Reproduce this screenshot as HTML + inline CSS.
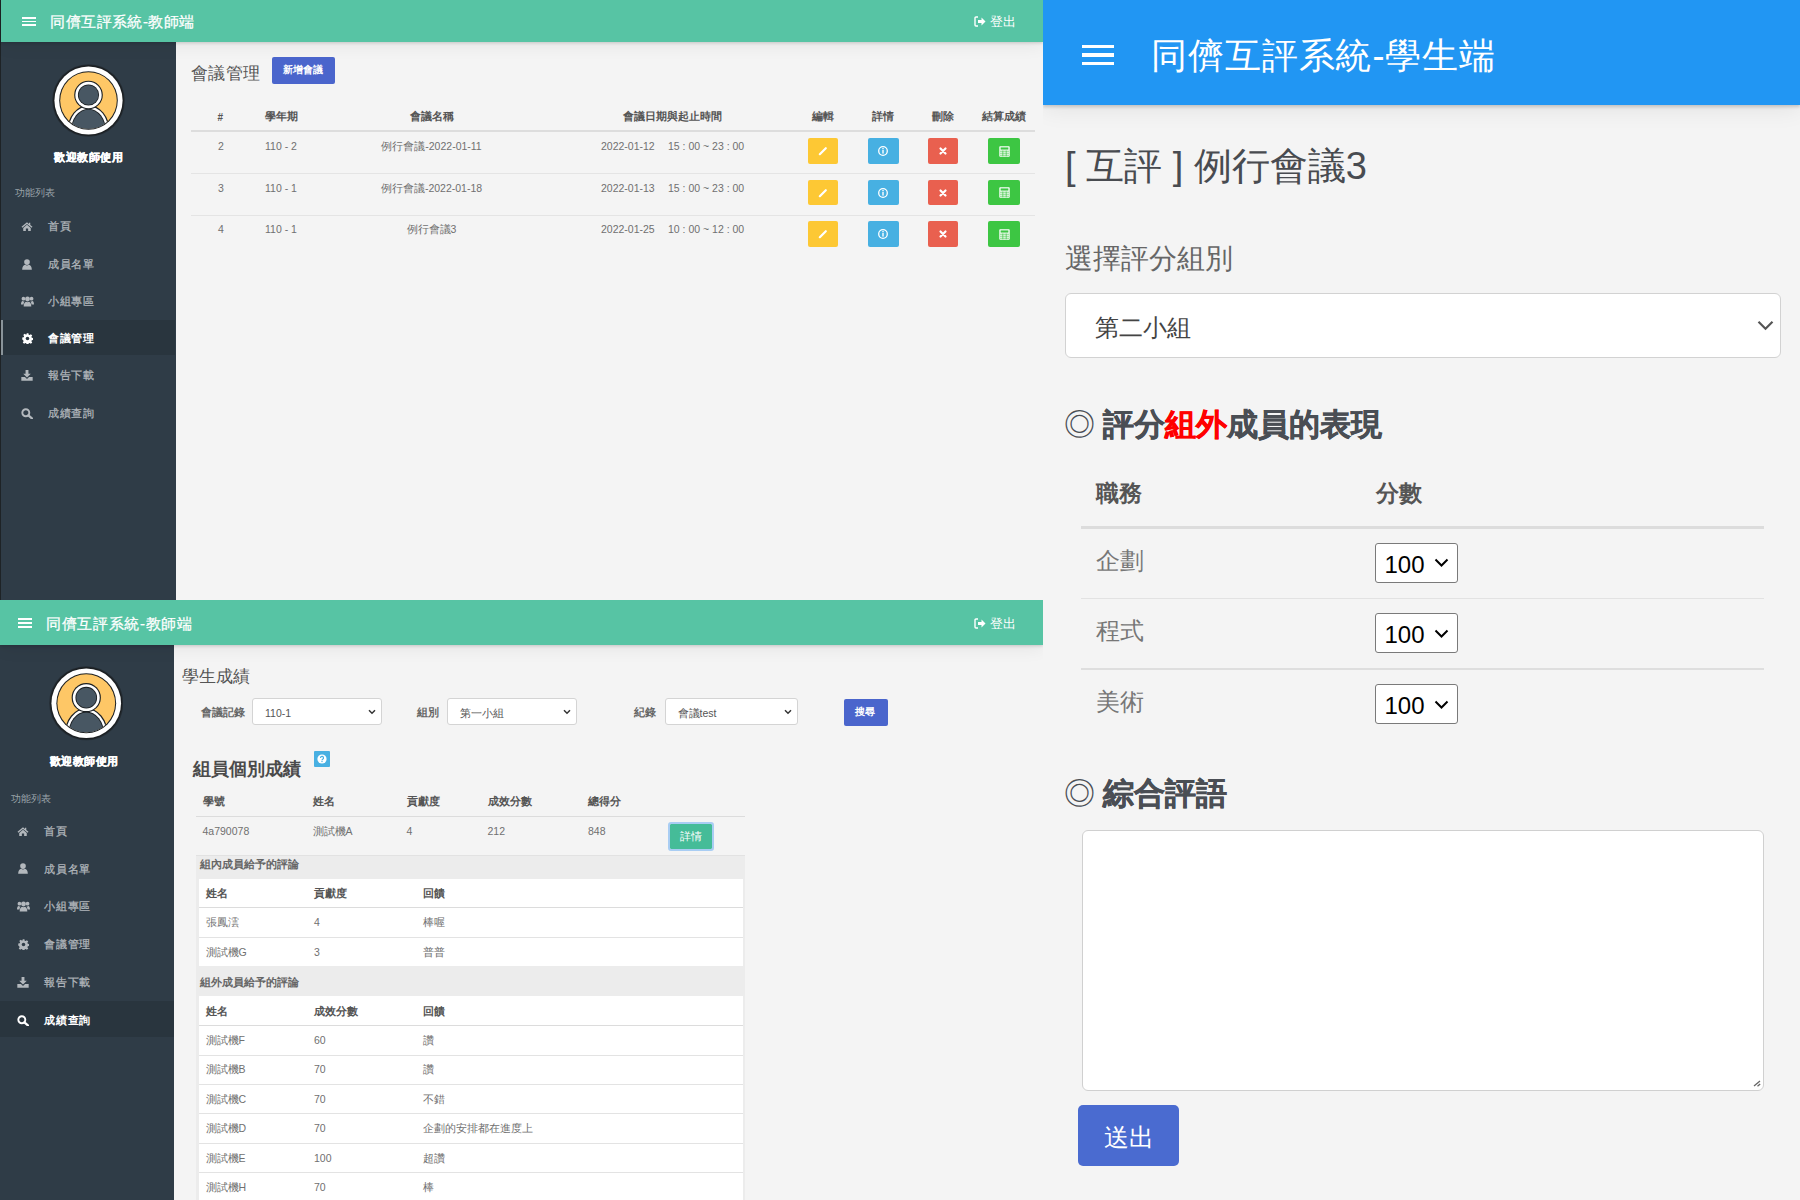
<!DOCTYPE html>
<html lang="zh-Hant">
<head>
<meta charset="utf-8">
<style>
*{box-sizing:border-box;margin:0;padding:0}
html,body{width:1800px;height:1200px;overflow:hidden;background:#f4f4f4;font-family:"Liberation Sans",sans-serif}
.a{position:absolute;white-space:nowrap;line-height:1}
.panel{position:absolute;overflow:hidden;background:#f4f4f4}
.hdr{position:absolute;background:#57c4a4;box-shadow:0 1px 3px rgba(0,0,0,.16),0 3px 18px rgba(0,0,0,.07)}
.bars i{position:absolute;left:0;width:100%;background:#fff;display:block}
svg{display:block}
</style>
</head>
<body>
<div class="panel" style="left:0;top:0;width:1043px;height:600px">
<div class="a" style="left:0px;top:0px;width:176px;height:600px;background:#2f3c47;"></div>
<div class="a" style="left:0px;top:0px;width:1px;height:600px;background:#1e2326;"></div>
<div class="hdr" style="left:1px;top:0;width:1042px;height:42px"></div>
<div class="bars a" style="left:22px;top:17px;width:14px;height:9px"><i style="top:0;height:1.6px"></i><i style="top:3.6px;height:1.6px"></i><i style="top:7.2px;height:1.6px"></i></div>
<div class="a" style="left:50.2px;top:13.5px;font-size:15px;color:#fff;letter-spacing:0.45px;-webkit-text-stroke:0.25px #fff;">同儕互評系統-教師端</div>
<div class="a" style="left:974px;top:15px;font-size:13px;color:#fff"><svg width="12" height="11" viewBox="0 0 12 11" style="display:inline-block;vertical-align:-1px;margin-right:4px"><path d="M4 1H2a1 1 0 0 0-1 1v7a1 1 0 0 0 1 1h2" fill="none" stroke="#fff" stroke-width="1.4"/><path d="M4 4h3.5V1.5L11.5 5.5 7.5 9.5V7H4z" fill="#fff"/></svg>登出</div>
<svg class="a" style="left:51.7px;top:64px" width="73" height="73" viewBox="0 0 73 73">
<circle cx="36.5" cy="36.5" r="36.3" fill="#1b1f22" opacity=".55"/><circle cx="36.5" cy="36.5" r="35.4" fill="#1b1f22"/><circle cx="36.5" cy="36.5" r="34.1" fill="#fff"/>
<circle cx="36.5" cy="36.5" r="29.3" fill="#1b1f22"/><circle cx="36.5" cy="36.5" r="28.3" fill="#fec766"/>
<clipPath id="av1"><circle cx="36.5" cy="36.5" r="28.3"/></clipPath>
<g clip-path="url(#av1)"><ellipse cx="36.5" cy="67.3" rx="21.2" ry="26.2" fill="#1b1f22"/><ellipse cx="36.5" cy="67.3" rx="20" ry="25" fill="#fff"/><ellipse cx="36.5" cy="67.3" rx="17.6" ry="22.6" fill="#1b1f22"/><ellipse cx="36.5" cy="67.3" rx="16.8" ry="21.8" fill="#485763"/></g>
<circle cx="36.5" cy="31" r="14.3" fill="#1b1f22"/><circle cx="36.5" cy="31" r="13.2" fill="#fff"/><circle cx="36.5" cy="31" r="10.6" fill="#1b1f22"/><circle cx="36.5" cy="31" r="9.8" fill="#485763"/>
</svg>
<div class="a" style="left:54px;top:151.5px;font-size:11px;color:#fff;font-weight:bold;letter-spacing:0.5px;-webkit-text-stroke:0.3px #fff;">歡迎教師使用</div>
<div class="a" style="left:15px;top:187.5px;font-size:9.5px;color:#9aa3a9;">功能列表</div>
<div class="a" style="left:1px;top:320px;width:174px;height:35px;background:#29353e;"></div>
<div class="a" style="left:1px;top:320px;width:2px;height:35px;background:#8a949a;"></div>
<div class="a" style="left:14px;top:219px;width:26px;height:14px;display:flex;align-items:center;justify-content:center"><svg width="12" height="9" viewBox="0 0 14 11"><path d="M7 0.3L0.3 5.9 1.3 7 7 2.3 12.7 7 13.7 5.9 11 3.6V0.8H9.4v1.5z" fill="#b3b8bd"/><path d="M2.4 7.2L7 3.3 11.6 7.2V11H8.4V8H5.6v3H2.4z" fill="#b3b8bd"/></svg></div>
<div class="a" style="left:48px;top:220.8px;font-size:11px;color:#b3b8bd;letter-spacing:0.6px;-webkit-text-stroke:0.25px #b3b8bd;">首頁</div>
<div class="a" style="left:14px;top:257px;width:26px;height:14px;display:flex;align-items:center;justify-content:center"><svg width="10" height="11" viewBox="0 0 12 13"><circle cx="6" cy="3.6" r="3.4" fill="#b3b8bd"/><path d="M0.2 12.8c0-3.6 1.6-5.6 3.5-5.9 .8.5 1.5.7 2.3.7s1.5-.2 2.3-.7c1.9.3 3.5 2.3 3.5 5.9z" fill="#b3b8bd"/></svg></div>
<div class="a" style="left:48px;top:258.8px;font-size:11px;color:#b3b8bd;letter-spacing:0.6px;-webkit-text-stroke:0.25px #b3b8bd;">成員名單</div>
<div class="a" style="left:14px;top:294px;width:26px;height:14px;display:flex;align-items:center;justify-content:center"><svg width="13" height="11" viewBox="0 0 16 13"><circle cx="8" cy="3.4" r="3" fill="#b3b8bd"/><circle cx="3" cy="3" r="2.3" fill="#b3b8bd"/><circle cx="13" cy="3" r="2.3" fill="#b3b8bd"/><path d="M3.3 12.8c0-3.8 1.6-5.8 2.8-6 .6.4 1.2.6 1.9.6s1.3-.2 1.9-.6c1.2.2 2.8 2.2 2.8 6z" fill="#b3b8bd"/><path d="M0 10.2c0-2.8 1-4 1.8-4.2.4.3.9.4 1.4.4.5 0 .8-.1 1.2-.3-.8 1.2-1.2 2.5-1.3 4.1z" fill="#b3b8bd"/><path d="M16 10.2c0-2.8-1-4-1.8-4.2-.4.3-.9.4-1.4.4-.5 0-.8-.1-1.2-.3.8 1.2 1.2 2.5 1.3 4.1z" fill="#b3b8bd"/></svg></div>
<div class="a" style="left:48px;top:295.8px;font-size:11px;color:#b3b8bd;letter-spacing:0.6px;-webkit-text-stroke:0.25px #b3b8bd;">小組專區</div>
<div class="a" style="left:14px;top:331px;width:26px;height:14px;display:flex;align-items:center;justify-content:center"><svg width="11" height="11" viewBox="0 0 13 13"><path d="M5.4 0.3h2.2l.3 1.7 1.2.5 1.4-1 1.6 1.6-1 1.4.5 1.2 1.7.3v2.2l-1.7.3-.5 1.2 1 1.4-1.6 1.6-1.4-1-1.2.5-.3 1.7H5.4l-.3-1.7-1.2-.5-1.4 1-1.6-1.6 1-1.4-.5-1.2L.3 7.6V5.4L2 5.1l.5-1.2-1-1.4 1.6-1.6 1.4 1 1.2-.5z" fill="#fff"/><circle cx="6.5" cy="6.5" r="2.1" fill="#29353e"/></svg></div>
<div class="a" style="left:48px;top:332.8px;font-size:11px;color:#fff;font-weight:bold;letter-spacing:0.6px;">會議管理</div>
<div class="a" style="left:14px;top:368px;width:26px;height:14px;display:flex;align-items:center;justify-content:center"><svg width="12" height="11" viewBox="0 0 14 13"><path d="M5.3 0h3.4v4.5h2.8L7 9 2.5 4.5h2.8z" fill="#b3b8bd"/><path d="M0.3 8.3h4.3L7 10.7l2.4-2.4h4.3v4.4H0.3z" fill="#b3b8bd"/></svg></div>
<div class="a" style="left:48px;top:369.8px;font-size:11px;color:#b3b8bd;letter-spacing:0.6px;-webkit-text-stroke:0.25px #b3b8bd;">報告下載</div>
<div class="a" style="left:14px;top:406px;width:26px;height:14px;display:flex;align-items:center;justify-content:center"><svg width="12" height="11" viewBox="0 0 13 12"><circle cx="5.2" cy="5.2" r="3.8" fill="none" stroke="#b3b8bd" stroke-width="2.1"/><path d="M8 8l3.8 3.3" stroke="#b3b8bd" stroke-width="2.5" stroke-linecap="round"/></svg></div>
<div class="a" style="left:48px;top:407.8px;font-size:11px;color:#b3b8bd;letter-spacing:0.6px;-webkit-text-stroke:0.25px #b3b8bd;">成績查詢</div>
<div class="a" style="left:191px;top:64.5px;font-size:17px;color:#555;letter-spacing:0.4px;">會議管理</div>
<div class="a" style="left:272px;top:57px;width:63px;height:27px;background:#4a65cc;border-radius:2px"></div>
<div class="a" style="left:283px;top:65px;font-size:9.5px;color:#fff;font-weight:bold;">新增會議</div>
<div class="a" style="left:217.5px;top:112.5px;font-size:10px;color:#555;font-weight:bold">#</div>
<div class="a" style="left:265px;top:111px;font-size:11px;color:#555;font-weight:bold;">學年期</div>
<div class="a" style="left:281.5px;width:300px;text-align:center;top:111px;font-size:11px;color:#555;font-weight:bold;">會議名稱</div>
<div class="a" style="left:522px;width:300px;text-align:center;top:111px;font-size:11px;color:#555;font-weight:bold;">會議日期與起止時間</div>
<div class="a" style="left:672.6px;width:300px;text-align:center;top:111px;font-size:11px;color:#555;font-weight:bold;">編輯</div>
<div class="a" style="left:733px;width:300px;text-align:center;top:111px;font-size:11px;color:#555;font-weight:bold;">詳情</div>
<div class="a" style="left:793.2px;width:300px;text-align:center;top:111px;font-size:11px;color:#555;font-weight:bold;">刪除</div>
<div class="a" style="left:854px;width:300px;text-align:center;top:111px;font-size:11px;color:#555;font-weight:bold;">結算成績</div>
<div class="a" style="left:191px;top:130px;width:844px;height:2px;background:#dddddd;"></div>
<div class="a" style="left:191px;top:172.5px;width:844px;height:1px;background:#e4e4e4;"></div>
<div class="a" style="left:191px;top:214.5px;width:844px;height:1px;background:#e4e4e4;"></div>
<div class="a" style="left:71px;width:300px;text-align:center;top:141.0px;font-size:10.5px;color:#707070;">2</div>
<div class="a" style="left:265px;top:141.0px;font-size:10.5px;color:#707070;">110 - 2</div>
<div class="a" style="left:281.5px;width:300px;text-align:center;top:141.0px;font-size:10.5px;color:#707070;">例行會議-2022-01-11</div>
<div class="a" style="left:601px;top:141.0px;font-size:10.5px;color:#707070;">2022-01-12</div>
<div class="a" style="left:668px;top:141.0px;font-size:10.5px;color:#707070;">15 : 00 ~ 23 : 00</div>
<div class="a" style="left:808px;top:138.0px;width:30px;height:25.5px;background:#fdc834;border-radius:2px"></div>
<div class="a" style="left:868px;top:138.0px;width:30.5px;height:25.5px;background:#47b0e2;border-radius:2px"></div>
<div class="a" style="left:928px;top:138.0px;width:30px;height:25.5px;background:#e9604f;border-radius:2px"></div>
<div class="a" style="left:988px;top:138.0px;width:32px;height:25.5px;background:#3dc643;border-radius:2px"></div>
<svg class="a" style="left:817px;top:145.0px" width="12" height="12" viewBox="0 0 12 12"><path d="M2.8 9.2l6-6" stroke="#fff" stroke-width="2.2" stroke-linecap="round"/></svg>
<svg class="a" style="left:877px;top:145.0px" width="12" height="12" viewBox="0 0 12 12"><circle cx="6" cy="6" r="4.3" fill="none" stroke="#fff" stroke-width="1.3"/><rect x="5.3" y="5" width="1.4" height="3.6" fill="#fff"/><rect x="5.3" y="3" width="1.4" height="1.3" fill="#fff"/></svg>
<svg class="a" style="left:937px;top:145.0px" width="12" height="12" viewBox="0 0 12 12"><path d="M3.5 3.5l5 5M8.5 3.5l-5 5" stroke="#fff" stroke-width="2.2" stroke-linecap="round"/></svg>
<svg class="a" style="left:998.5px;top:145.5px" width="11" height="11" viewBox="0 0 11 11"><rect x="0.3" y="0.2" width="10.4" height="10.6" rx="0.8" fill="#fff"/><rect x="1.6" y="1.4" width="7.8" height="2.2" fill="#3dc643"/><path d="M1 5.2h9M1 7.2h9M1 9.2h9M3.8 4.5v5.8M7.2 4.5v5.8" stroke="#3dc643" stroke-width="0.7"/></svg>
<div class="a" style="left:71px;width:300px;text-align:center;top:182.7px;font-size:10.5px;color:#707070;">3</div>
<div class="a" style="left:265px;top:182.7px;font-size:10.5px;color:#707070;">110 - 1</div>
<div class="a" style="left:281.5px;width:300px;text-align:center;top:182.7px;font-size:10.5px;color:#707070;">例行會議-2022-01-18</div>
<div class="a" style="left:601px;top:182.7px;font-size:10.5px;color:#707070;">2022-01-13</div>
<div class="a" style="left:668px;top:182.7px;font-size:10.5px;color:#707070;">15 : 00 ~ 23 : 00</div>
<div class="a" style="left:808px;top:179.6px;width:30px;height:25.5px;background:#fdc834;border-radius:2px"></div>
<div class="a" style="left:868px;top:179.6px;width:30.5px;height:25.5px;background:#47b0e2;border-radius:2px"></div>
<div class="a" style="left:928px;top:179.6px;width:30px;height:25.5px;background:#e9604f;border-radius:2px"></div>
<div class="a" style="left:988px;top:179.6px;width:32px;height:25.5px;background:#3dc643;border-radius:2px"></div>
<svg class="a" style="left:817px;top:186.6px" width="12" height="12" viewBox="0 0 12 12"><path d="M2.8 9.2l6-6" stroke="#fff" stroke-width="2.2" stroke-linecap="round"/></svg>
<svg class="a" style="left:877px;top:186.6px" width="12" height="12" viewBox="0 0 12 12"><circle cx="6" cy="6" r="4.3" fill="none" stroke="#fff" stroke-width="1.3"/><rect x="5.3" y="5" width="1.4" height="3.6" fill="#fff"/><rect x="5.3" y="3" width="1.4" height="1.3" fill="#fff"/></svg>
<svg class="a" style="left:937px;top:186.6px" width="12" height="12" viewBox="0 0 12 12"><path d="M3.5 3.5l5 5M8.5 3.5l-5 5" stroke="#fff" stroke-width="2.2" stroke-linecap="round"/></svg>
<svg class="a" style="left:998.5px;top:187.1px" width="11" height="11" viewBox="0 0 11 11"><rect x="0.3" y="0.2" width="10.4" height="10.6" rx="0.8" fill="#fff"/><rect x="1.6" y="1.4" width="7.8" height="2.2" fill="#3dc643"/><path d="M1 5.2h9M1 7.2h9M1 9.2h9M3.8 4.5v5.8M7.2 4.5v5.8" stroke="#3dc643" stroke-width="0.7"/></svg>
<div class="a" style="left:71px;width:300px;text-align:center;top:224.4px;font-size:10.5px;color:#707070;">4</div>
<div class="a" style="left:265px;top:224.4px;font-size:10.5px;color:#707070;">110 - 1</div>
<div class="a" style="left:281.5px;width:300px;text-align:center;top:224.4px;font-size:10.5px;color:#707070;">例行會議3</div>
<div class="a" style="left:601px;top:224.4px;font-size:10.5px;color:#707070;">2022-01-25</div>
<div class="a" style="left:668px;top:224.4px;font-size:10.5px;color:#707070;">10 : 00 ~ 12 : 00</div>
<div class="a" style="left:808px;top:221.2px;width:30px;height:25.5px;background:#fdc834;border-radius:2px"></div>
<div class="a" style="left:868px;top:221.2px;width:30.5px;height:25.5px;background:#47b0e2;border-radius:2px"></div>
<div class="a" style="left:928px;top:221.2px;width:30px;height:25.5px;background:#e9604f;border-radius:2px"></div>
<div class="a" style="left:988px;top:221.2px;width:32px;height:25.5px;background:#3dc643;border-radius:2px"></div>
<svg class="a" style="left:817px;top:228.2px" width="12" height="12" viewBox="0 0 12 12"><path d="M2.8 9.2l6-6" stroke="#fff" stroke-width="2.2" stroke-linecap="round"/></svg>
<svg class="a" style="left:877px;top:228.2px" width="12" height="12" viewBox="0 0 12 12"><circle cx="6" cy="6" r="4.3" fill="none" stroke="#fff" stroke-width="1.3"/><rect x="5.3" y="5" width="1.4" height="3.6" fill="#fff"/><rect x="5.3" y="3" width="1.4" height="1.3" fill="#fff"/></svg>
<svg class="a" style="left:937px;top:228.2px" width="12" height="12" viewBox="0 0 12 12"><path d="M3.5 3.5l5 5M8.5 3.5l-5 5" stroke="#fff" stroke-width="2.2" stroke-linecap="round"/></svg>
<svg class="a" style="left:998.5px;top:228.7px" width="11" height="11" viewBox="0 0 11 11"><rect x="0.3" y="0.2" width="10.4" height="10.6" rx="0.8" fill="#fff"/><rect x="1.6" y="1.4" width="7.8" height="2.2" fill="#3dc643"/><path d="M1 5.2h9M1 7.2h9M1 9.2h9M3.8 4.5v5.8M7.2 4.5v5.8" stroke="#3dc643" stroke-width="0.7"/></svg>
</div>
<div class="panel" style="left:0;top:600px;width:1043px;height:600px">
<div class="a" style="left:0px;top:45px;width:174px;height:555px;background:#2f3c47;"></div>
<div class="hdr" style="left:0;top:0;width:1043px;height:45px"></div>
<div class="bars a" style="left:18px;top:18px;width:14px;height:10px"><i style="top:0;height:1.7px"></i><i style="top:4px;height:1.7px"></i><i style="top:8px;height:1.7px"></i></div>
<div class="a" style="left:46.2px;top:15.5px;font-size:15px;color:#fff;letter-spacing:0.65px;-webkit-text-stroke:0.25px #fff;">同儕互評系統-教師端</div>
<div class="a" style="left:974px;top:17px;font-size:13px;color:#fff"><svg width="12" height="11" viewBox="0 0 12 11" style="display:inline-block;vertical-align:-1px;margin-right:4px"><path d="M4 1H2a1 1 0 0 0-1 1v7a1 1 0 0 0 1 1h2" fill="none" stroke="#fff" stroke-width="1.4"/><path d="M4 4h3.5V1.5L11.5 5.5 7.5 9.5V7H4z" fill="#fff"/></svg>登出</div>
<svg class="a" style="left:48.5px;top:66.3px" width="74.5" height="74.5" viewBox="0 0 73 73">
<circle cx="36.5" cy="36.5" r="36.3" fill="#1b1f22" opacity=".55"/><circle cx="36.5" cy="36.5" r="35.4" fill="#1b1f22"/><circle cx="36.5" cy="36.5" r="34.1" fill="#fff"/>
<circle cx="36.5" cy="36.5" r="29.3" fill="#1b1f22"/><circle cx="36.5" cy="36.5" r="28.3" fill="#fec766"/>
<clipPath id="av2"><circle cx="36.5" cy="36.5" r="28.3"/></clipPath>
<g clip-path="url(#av2)"><ellipse cx="36.5" cy="67.3" rx="21.2" ry="26.2" fill="#1b1f22"/><ellipse cx="36.5" cy="67.3" rx="20" ry="25" fill="#fff"/><ellipse cx="36.5" cy="67.3" rx="17.6" ry="22.6" fill="#1b1f22"/><ellipse cx="36.5" cy="67.3" rx="16.8" ry="21.8" fill="#485763"/></g>
<circle cx="36.5" cy="31" r="14.3" fill="#1b1f22"/><circle cx="36.5" cy="31" r="13.2" fill="#fff"/><circle cx="36.5" cy="31" r="10.6" fill="#1b1f22"/><circle cx="36.5" cy="31" r="9.8" fill="#485763"/>
</svg>
<div class="a" style="left:49.5px;top:155.5px;font-size:11px;color:#fff;font-weight:bold;letter-spacing:0.5px;-webkit-text-stroke:0.3px #fff;">歡迎教師使用</div>
<div class="a" style="left:11px;top:194px;font-size:9.5px;color:#9aa3a9;">功能列表</div>
<div class="a" style="left:0px;top:401px;width:174px;height:35.5px;background:#29353e;"></div>
<div class="a" style="left:10.399999999999999px;top:224px;width:26px;height:14px;display:flex;align-items:center;justify-content:center"><svg width="12" height="9" viewBox="0 0 14 11"><path d="M7 0.3L0.3 5.9 1.3 7 7 2.3 12.7 7 13.7 5.9 11 3.6V0.8H9.4v1.5z" fill="#b3b8bd"/><path d="M2.4 7.2L7 3.3 11.6 7.2V11H8.4V8H5.6v3H2.4z" fill="#b3b8bd"/></svg></div>
<div class="a" style="left:44.4px;top:225.8px;font-size:11px;color:#b3b8bd;letter-spacing:0.6px;-webkit-text-stroke:0.25px #b3b8bd;">首頁</div>
<div class="a" style="left:10.399999999999999px;top:261.7px;width:26px;height:14px;display:flex;align-items:center;justify-content:center"><svg width="10" height="11" viewBox="0 0 12 13"><circle cx="6" cy="3.6" r="3.4" fill="#b3b8bd"/><path d="M0.2 12.8c0-3.6 1.6-5.6 3.5-5.9 .8.5 1.5.7 2.3.7s1.5-.2 2.3-.7c1.9.3 3.5 2.3 3.5 5.9z" fill="#b3b8bd"/></svg></div>
<div class="a" style="left:44.4px;top:263.5px;font-size:11px;color:#b3b8bd;letter-spacing:0.6px;-webkit-text-stroke:0.25px #b3b8bd;">成員名單</div>
<div class="a" style="left:10.399999999999999px;top:299.2px;width:26px;height:14px;display:flex;align-items:center;justify-content:center"><svg width="13" height="11" viewBox="0 0 16 13"><circle cx="8" cy="3.4" r="3" fill="#b3b8bd"/><circle cx="3" cy="3" r="2.3" fill="#b3b8bd"/><circle cx="13" cy="3" r="2.3" fill="#b3b8bd"/><path d="M3.3 12.8c0-3.8 1.6-5.8 2.8-6 .6.4 1.2.6 1.9.6s1.3-.2 1.9-.6c1.2.2 2.8 2.2 2.8 6z" fill="#b3b8bd"/><path d="M0 10.2c0-2.8 1-4 1.8-4.2.4.3.9.4 1.4.4.5 0 .8-.1 1.2-.3-.8 1.2-1.2 2.5-1.3 4.1z" fill="#b3b8bd"/><path d="M16 10.2c0-2.8-1-4-1.8-4.2-.4.3-.9.4-1.4.4-.5 0-.8-.1-1.2-.3.8 1.2 1.2 2.5 1.3 4.1z" fill="#b3b8bd"/></svg></div>
<div class="a" style="left:44.4px;top:301.0px;font-size:11px;color:#b3b8bd;letter-spacing:0.6px;-webkit-text-stroke:0.25px #b3b8bd;">小組專區</div>
<div class="a" style="left:10.399999999999999px;top:337.1px;width:26px;height:14px;display:flex;align-items:center;justify-content:center"><svg width="11" height="11" viewBox="0 0 13 13"><path d="M5.4 0.3h2.2l.3 1.7 1.2.5 1.4-1 1.6 1.6-1 1.4.5 1.2 1.7.3v2.2l-1.7.3-.5 1.2 1 1.4-1.6 1.6-1.4-1-1.2.5-.3 1.7H5.4l-.3-1.7-1.2-.5-1.4 1-1.6-1.6 1-1.4-.5-1.2L.3 7.6V5.4L2 5.1l.5-1.2-1-1.4 1.6-1.6 1.4 1 1.2-.5z" fill="#b3b8bd"/><circle cx="6.5" cy="6.5" r="2.1" fill="#2f3c47"/></svg></div>
<div class="a" style="left:44.4px;top:338.90000000000003px;font-size:11px;color:#b3b8bd;letter-spacing:0.6px;-webkit-text-stroke:0.25px #b3b8bd;">會議管理</div>
<div class="a" style="left:10.399999999999999px;top:375px;width:26px;height:14px;display:flex;align-items:center;justify-content:center"><svg width="12" height="11" viewBox="0 0 14 13"><path d="M5.3 0h3.4v4.5h2.8L7 9 2.5 4.5h2.8z" fill="#b3b8bd"/><path d="M0.3 8.3h4.3L7 10.7l2.4-2.4h4.3v4.4H0.3z" fill="#b3b8bd"/></svg></div>
<div class="a" style="left:44.4px;top:376.8px;font-size:11px;color:#b3b8bd;letter-spacing:0.6px;-webkit-text-stroke:0.25px #b3b8bd;">報告下載</div>
<div class="a" style="left:10.399999999999999px;top:413px;width:26px;height:14px;display:flex;align-items:center;justify-content:center"><svg width="12" height="11" viewBox="0 0 13 12"><circle cx="5.2" cy="5.2" r="3.8" fill="none" stroke="#fff" stroke-width="2.1"/><path d="M8 8l3.8 3.3" stroke="#fff" stroke-width="2.5" stroke-linecap="round"/></svg></div>
<div class="a" style="left:44.4px;top:414.8px;font-size:11px;color:#fff;font-weight:bold;letter-spacing:0.6px;">成績查詢</div>
<div class="a" style="left:181.5px;top:68px;font-size:17px;color:#555;">學生成績</div>
<div class="a" style="left:201px;top:107px;font-size:10.5px;color:#666;font-weight:bold;">會議記錄</div>
<div class="a" style="left:252px;top:98px;width:130px;height:27px;background:#fff;border:1px solid #d4d4d4;border-radius:3px"></div>
<div class="a" style="left:265px;top:107.5px;font-size:10.5px;color:#555;">110-1</div>
<svg class="a" style="left:368px;top:108.5px" width="8" height="6" viewBox="0 0 8 6"><path d="M1 1.2l3 3 3-3" fill="none" stroke="#333" stroke-width="1.5"/></svg>
<div class="a" style="left:417px;top:107px;font-size:10.5px;color:#666;font-weight:bold;">組別</div>
<div class="a" style="left:446.5px;top:98px;width:130.5px;height:27px;background:#fff;border:1px solid #d4d4d4;border-radius:3px"></div>
<div class="a" style="left:459.5px;top:107.5px;font-size:10.5px;color:#555;">第一小組</div>
<svg class="a" style="left:563px;top:108.5px" width="8" height="6" viewBox="0 0 8 6"><path d="M1 1.2l3 3 3-3" fill="none" stroke="#333" stroke-width="1.5"/></svg>
<div class="a" style="left:634px;top:107px;font-size:10.5px;color:#666;font-weight:bold;">紀錄</div>
<div class="a" style="left:664.5px;top:98px;width:133.5px;height:27px;background:#fff;border:1px solid #d4d4d4;border-radius:3px"></div>
<div class="a" style="left:677.5px;top:107.5px;font-size:10.5px;color:#555;">會議test</div>
<svg class="a" style="left:784px;top:108.5px" width="8" height="6" viewBox="0 0 8 6"><path d="M1 1.2l3 3 3-3" fill="none" stroke="#333" stroke-width="1.5"/></svg>
<div class="a" style="left:844px;top:99px;width:43.5px;height:26.5px;background:#4a65cc;border-radius:2px"></div>
<div class="a" style="left:855px;top:106.5px;font-size:10px;color:#fff;font-weight:bold;">搜尋</div>
<div class="a" style="left:314px;top:150.5px;width:16px;height:16px;background:#48b0e2;border-radius:1px"></div>
<svg class="a" style="left:317px;top:153.5px" width="10" height="10" viewBox="0 0 10 10"><circle cx="5" cy="5" r="4.6" fill="#fff"/><path d="M3.5 3.9a1.5 1.5 0 1 1 2.2 1.3c-.5.3-.7.5-.7 1.1" fill="none" stroke="#48b0e2" stroke-width="1.2"/><rect x="4.4" y="6.9" width="1.2" height="1.2" fill="#48b0e2"/></svg>
<div class="a" style="left:192.5px;top:161px;font-size:17.5px;color:#4a4a4a;font-weight:bold;">組員個別成績</div>
<div class="a" style="left:202.5px;top:196px;font-size:11px;color:#555;font-weight:bold;">學號</div>
<div class="a" style="left:312.5px;top:196px;font-size:11px;color:#555;font-weight:bold;">姓名</div>
<div class="a" style="left:406.5px;top:196px;font-size:11px;color:#555;font-weight:bold;">貢獻度</div>
<div class="a" style="left:487.5px;top:196px;font-size:11px;color:#555;font-weight:bold;">成效分數</div>
<div class="a" style="left:588px;top:196px;font-size:11px;color:#555;font-weight:bold;">總得分</div>
<div class="a" style="left:196px;top:215.5px;width:549px;height:1.6px;background:#dcdcdc;"></div>
<div class="a" style="left:202.5px;top:226px;font-size:10.5px;color:#707070;">4a790078</div>
<div class="a" style="left:312.5px;top:226px;font-size:10.5px;color:#707070;">測試機A</div>
<div class="a" style="left:406.5px;top:226px;font-size:10.5px;color:#707070;">4</div>
<div class="a" style="left:487.5px;top:226px;font-size:10.5px;color:#707070;">212</div>
<div class="a" style="left:588px;top:226px;font-size:10.5px;color:#707070;">848</div>
<div class="a" style="left:667.5px;top:221.5px;width:46px;height:29px;background:#45bc98;border:2px solid #a9cdf3;border-radius:3px;background-clip:padding-box"></div>
<div class="a" style="left:680px;top:230.5px;font-size:11px;color:#fff;">詳情</div>
<div class="a" style="left:196px;top:254.5px;width:549px;height:346px;background:#ececec;"></div>
<div class="a" style="left:196px;top:254.5px;width:549px;height:1px;background:#e2e2e2;"></div>
<div class="a" style="left:199.5px;top:259px;font-size:11px;color:#666;font-weight:bold;">組內成員給予的評論</div>
<div class="a" style="left:199px;top:278.5px;width:543.5px;height:87.5px;background:#fff;"></div>
<div class="a" style="left:205.5px;top:288px;font-size:11px;color:#555;font-weight:bold;">姓名</div>
<div class="a" style="left:314px;top:288px;font-size:11px;color:#555;font-weight:bold;">貢獻度</div>
<div class="a" style="left:422.5px;top:288px;font-size:11px;color:#555;font-weight:bold;">回饋</div>
<div class="a" style="left:199px;top:306.5px;width:543.5px;height:1.6px;background:#dcdcdc;"></div>
<div class="a" style="left:205.5px;top:317.0px;font-size:10.5px;color:#707070;">張鳳澐</div>
<div class="a" style="left:314px;top:317.0px;font-size:10.5px;color:#707070;">4</div>
<div class="a" style="left:422.5px;top:317.0px;font-size:10.5px;color:#707070;">棒喔</div>
<div class="a" style="left:205.5px;top:347.0px;font-size:10.5px;color:#707070;">測試機G</div>
<div class="a" style="left:314px;top:347.0px;font-size:10.5px;color:#707070;">3</div>
<div class="a" style="left:422.5px;top:347.0px;font-size:10.5px;color:#707070;">普普</div>
<div class="a" style="left:199px;top:337px;width:543.5px;height:1px;background:#e3e3e3;"></div>
<div class="a" style="left:199.5px;top:377px;font-size:11px;color:#666;font-weight:bold;">組外成員給予的評論</div>
<div class="a" style="left:199px;top:396.3px;width:543.5px;height:210px;background:#fff;"></div>
<div class="a" style="left:205.5px;top:405.8px;font-size:11px;color:#555;font-weight:bold;">姓名</div>
<div class="a" style="left:314px;top:405.8px;font-size:11px;color:#555;font-weight:bold;">成效分數</div>
<div class="a" style="left:422.5px;top:405.8px;font-size:11px;color:#555;font-weight:bold;">回饋</div>
<div class="a" style="left:199px;top:424.5px;width:543.5px;height:1.6px;background:#dcdcdc;"></div>
<div class="a" style="left:205.5px;top:435.0px;font-size:10.5px;color:#707070;">測試機F</div>
<div class="a" style="left:314px;top:435.0px;font-size:10.5px;color:#707070;">60</div>
<div class="a" style="left:422.5px;top:435.0px;font-size:10.5px;color:#707070;">讚</div>
<div class="a" style="left:199px;top:454.5px;width:543.5px;height:1px;background:#e3e3e3;"></div>
<div class="a" style="left:205.5px;top:464.4px;font-size:10.5px;color:#707070;">測試機B</div>
<div class="a" style="left:314px;top:464.4px;font-size:10.5px;color:#707070;">70</div>
<div class="a" style="left:422.5px;top:464.4px;font-size:10.5px;color:#707070;">讚</div>
<div class="a" style="left:199px;top:483.9px;width:543.5px;height:1px;background:#e3e3e3;"></div>
<div class="a" style="left:205.5px;top:493.8px;font-size:10.5px;color:#707070;">測試機C</div>
<div class="a" style="left:314px;top:493.8px;font-size:10.5px;color:#707070;">70</div>
<div class="a" style="left:422.5px;top:493.8px;font-size:10.5px;color:#707070;">不錯</div>
<div class="a" style="left:199px;top:513.3px;width:543.5px;height:1px;background:#e3e3e3;"></div>
<div class="a" style="left:205.5px;top:523.2px;font-size:10.5px;color:#707070;">測試機D</div>
<div class="a" style="left:314px;top:523.2px;font-size:10.5px;color:#707070;">70</div>
<div class="a" style="left:422.5px;top:523.2px;font-size:10.5px;color:#707070;">企劃的安排都在進度上</div>
<div class="a" style="left:199px;top:542.7px;width:543.5px;height:1px;background:#e3e3e3;"></div>
<div class="a" style="left:205.5px;top:552.6px;font-size:10.5px;color:#707070;">測試機E</div>
<div class="a" style="left:314px;top:552.6px;font-size:10.5px;color:#707070;">100</div>
<div class="a" style="left:422.5px;top:552.6px;font-size:10.5px;color:#707070;">超讚</div>
<div class="a" style="left:199px;top:572.1px;width:543.5px;height:1px;background:#e3e3e3;"></div>
<div class="a" style="left:205.5px;top:582.0px;font-size:10.5px;color:#707070;">測試機H</div>
<div class="a" style="left:314px;top:582.0px;font-size:10.5px;color:#707070;">70</div>
<div class="a" style="left:422.5px;top:582.0px;font-size:10.5px;color:#707070;">棒</div>
</div>
<div class="panel" style="left:1043px;top:0;width:757px;height:1200px">
<div class="a" style="left:0px;top:0px;width:757px;height:104.7px;background:#2196f3;box-shadow:0 2px 3px rgba(0,0,0,.17),0 4px 22px rgba(0,0,0,.08)"></div>
<div class="bars a" style="left:38.5px;top:44.5px;width:32px;height:21px"><i style="top:0;height:3.4px"></i><i style="top:8.7px;height:3.4px"></i><i style="top:17.5px;height:3.4px"></i></div>
<div class="a" style="left:108px;top:38px;font-size:36px;color:#fff;letter-spacing:0.9px;">同儕互評系統-學生端</div>
<div class="a" style="left:22px;top:146.5px;font-size:38px;color:#484b50;">[ 互評 ] 例行會議3</div>
<div class="a" style="left:21.5px;top:245px;font-size:27.7px;color:#666;">選擇評分組別</div>
<div class="a" style="left:21.5px;top:293.3px;width:716px;height:65.2px;background:#fff;border:1px solid #d2d2d2;border-radius:6px"></div>
<div class="a" style="left:51.5px;top:316px;font-size:24px;color:#444;">第二小組</div>
<svg class="a" style="left:713.5px;top:320px" width="17" height="11" viewBox="0 0 17 11"><path d="M1.5 1.8l7 7 7-7" fill="none" stroke="#555" stroke-width="2.2"/></svg>
<div class="a" style="left:21px;top:409px;font-size:31px;color:#4a4e54">◎</div>
<div class="a" style="left:60px;top:409px;font-size:31px;color:#4a4e54;font-weight:bold;-webkit-text-stroke:0.5px #4a4e54">評分<span style="color:#f00;-webkit-text-stroke:0.5px #f00">組外</span>成員的表現</div>
<div class="a" style="left:52.5px;top:481.5px;font-size:23px;color:#555;font-weight:bold;">職務</div>
<div class="a" style="left:332.5px;top:481.5px;font-size:23px;color:#555;font-weight:bold;">分數</div>
<div class="a" style="left:38px;top:525.8px;width:683px;height:3px;background:#dcdcdc;"></div>
<div class="a" style="left:38px;top:597.5px;width:683px;height:1.2px;background:#e2e2e2;"></div>
<div class="a" style="left:38px;top:668.3px;width:683px;height:1.8px;background:#dedede;"></div>
<div class="a" style="left:52.5px;top:549.7px;font-size:23.5px;color:#777;">企劃</div>
<div class="a" style="left:332.2px;top:542.8px;width:82.8px;height:40.2px;background:#fff;border:1px solid #7a7a7a;border-radius:3px"></div>
<div class="a" style="left:341.5px;top:552.8px;font-size:24px;color:#000;">100</div>
<svg class="a" style="left:391px;top:558.3px" width="15" height="9" viewBox="0 0 15 9"><path d="M1.5 1.5l6 6 6-6" fill="none" stroke="#000" stroke-width="2"/></svg>
<div class="a" style="left:52.5px;top:619.8px;font-size:23.5px;color:#777;">程式</div>
<div class="a" style="left:332.2px;top:613.3px;width:82.8px;height:40.2px;background:#fff;border:1px solid #7a7a7a;border-radius:3px"></div>
<div class="a" style="left:341.5px;top:623.3px;font-size:24px;color:#000;">100</div>
<svg class="a" style="left:391px;top:628.8px" width="15" height="9" viewBox="0 0 15 9"><path d="M1.5 1.5l6 6 6-6" fill="none" stroke="#000" stroke-width="2"/></svg>
<div class="a" style="left:52.5px;top:690.5px;font-size:23.5px;color:#777;">美術</div>
<div class="a" style="left:332.2px;top:684px;width:82.8px;height:40.2px;background:#fff;border:1px solid #7a7a7a;border-radius:3px"></div>
<div class="a" style="left:341.5px;top:694px;font-size:24px;color:#000;">100</div>
<svg class="a" style="left:391px;top:699.5px" width="15" height="9" viewBox="0 0 15 9"><path d="M1.5 1.5l6 6 6-6" fill="none" stroke="#000" stroke-width="2"/></svg>
<div class="a" style="left:21px;top:778px;font-size:31px;color:#4a4e54">◎</div>
<div class="a" style="left:60px;top:778px;font-size:31px;color:#4a4e54;font-weight:bold;-webkit-text-stroke:0.5px #4a4e54">綜合評語</div>
<div class="a" style="left:38.5px;top:829.5px;width:682px;height:261px;background:#fff;border:1px solid #d0d0d0;border-radius:6px"></div>
<svg class="a" style="left:710px;top:1080px" width="8" height="7" viewBox="0 0 8 7"><path d="M1 6l6-5M4.5 6.2L7.2 4" stroke="#666" stroke-width="1.3"/></svg>
<div class="a" style="left:35px;top:1104.7px;width:101px;height:61.4px;background:#4a6bd0;border-radius:5px"></div>
<div class="a" style="left:61px;top:1124.5px;font-size:25px;color:#fff;">送出</div>
</div>

</body>
</html>
